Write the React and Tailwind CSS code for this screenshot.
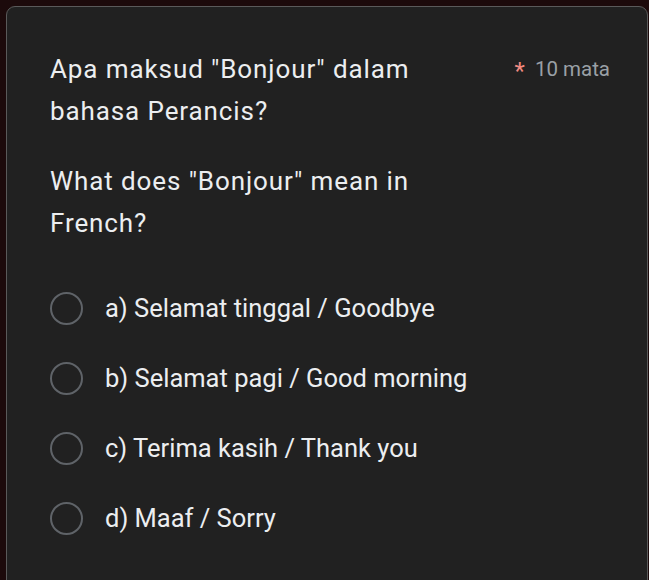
export default function App() {
  return (
    <div className="w-[649px] h-[580px] bg-[#1c0a0b] overflow-hidden pt-[6px] pl-[6px]" style={{ fontFamily: 'Roboto, "Noto Sans", sans-serif' }}>
      <div className="w-[642px] h-[600px] bg-[#212121] border border-[#5a5a5a] rounded-[9px] pl-[43px] pr-[37px] pt-[41px]">
        <div className="flex justify-between items-start">
          <div className="w-[410px] text-[26px] leading-[42px] tracking-[0.9px] text-[#eceef0]">
            <p>Apa maksud "Bonjour" dalam bahasa Perancis?</p>
            <p className="mt-[28px]">What does "Bonjour" mean in French?</p>
          </div>
          <div className="flex items-center h-[42px] text-[20.5px] text-[#9aa0a6]">
            <span className="text-[#f28b82] text-[24px] mr-[10px] mt-[4px]">*</span>
            <span>10 mata</span>
          </div>
        </div>
        <div className="mt-[48px] flex flex-col gap-[37px]">
          {["a) Selamat tinggal / Goodbye", "b) Selamat pagi / Good morning", "c) Terima kasih / Thank you", "d) Maaf / Sorry"].map((t) => (
            <div key={t} className="flex items-center h-[33px]">
              <div className="w-[33px] h-[33px] rounded-full border-[2.5px] border-[#5f6368]" />
              <span className="ml-[22px] text-[25.5px] text-[#eceef0]">{t}</span>
            </div>
          ))}
        </div>
      </div>
    </div>
  );
}
